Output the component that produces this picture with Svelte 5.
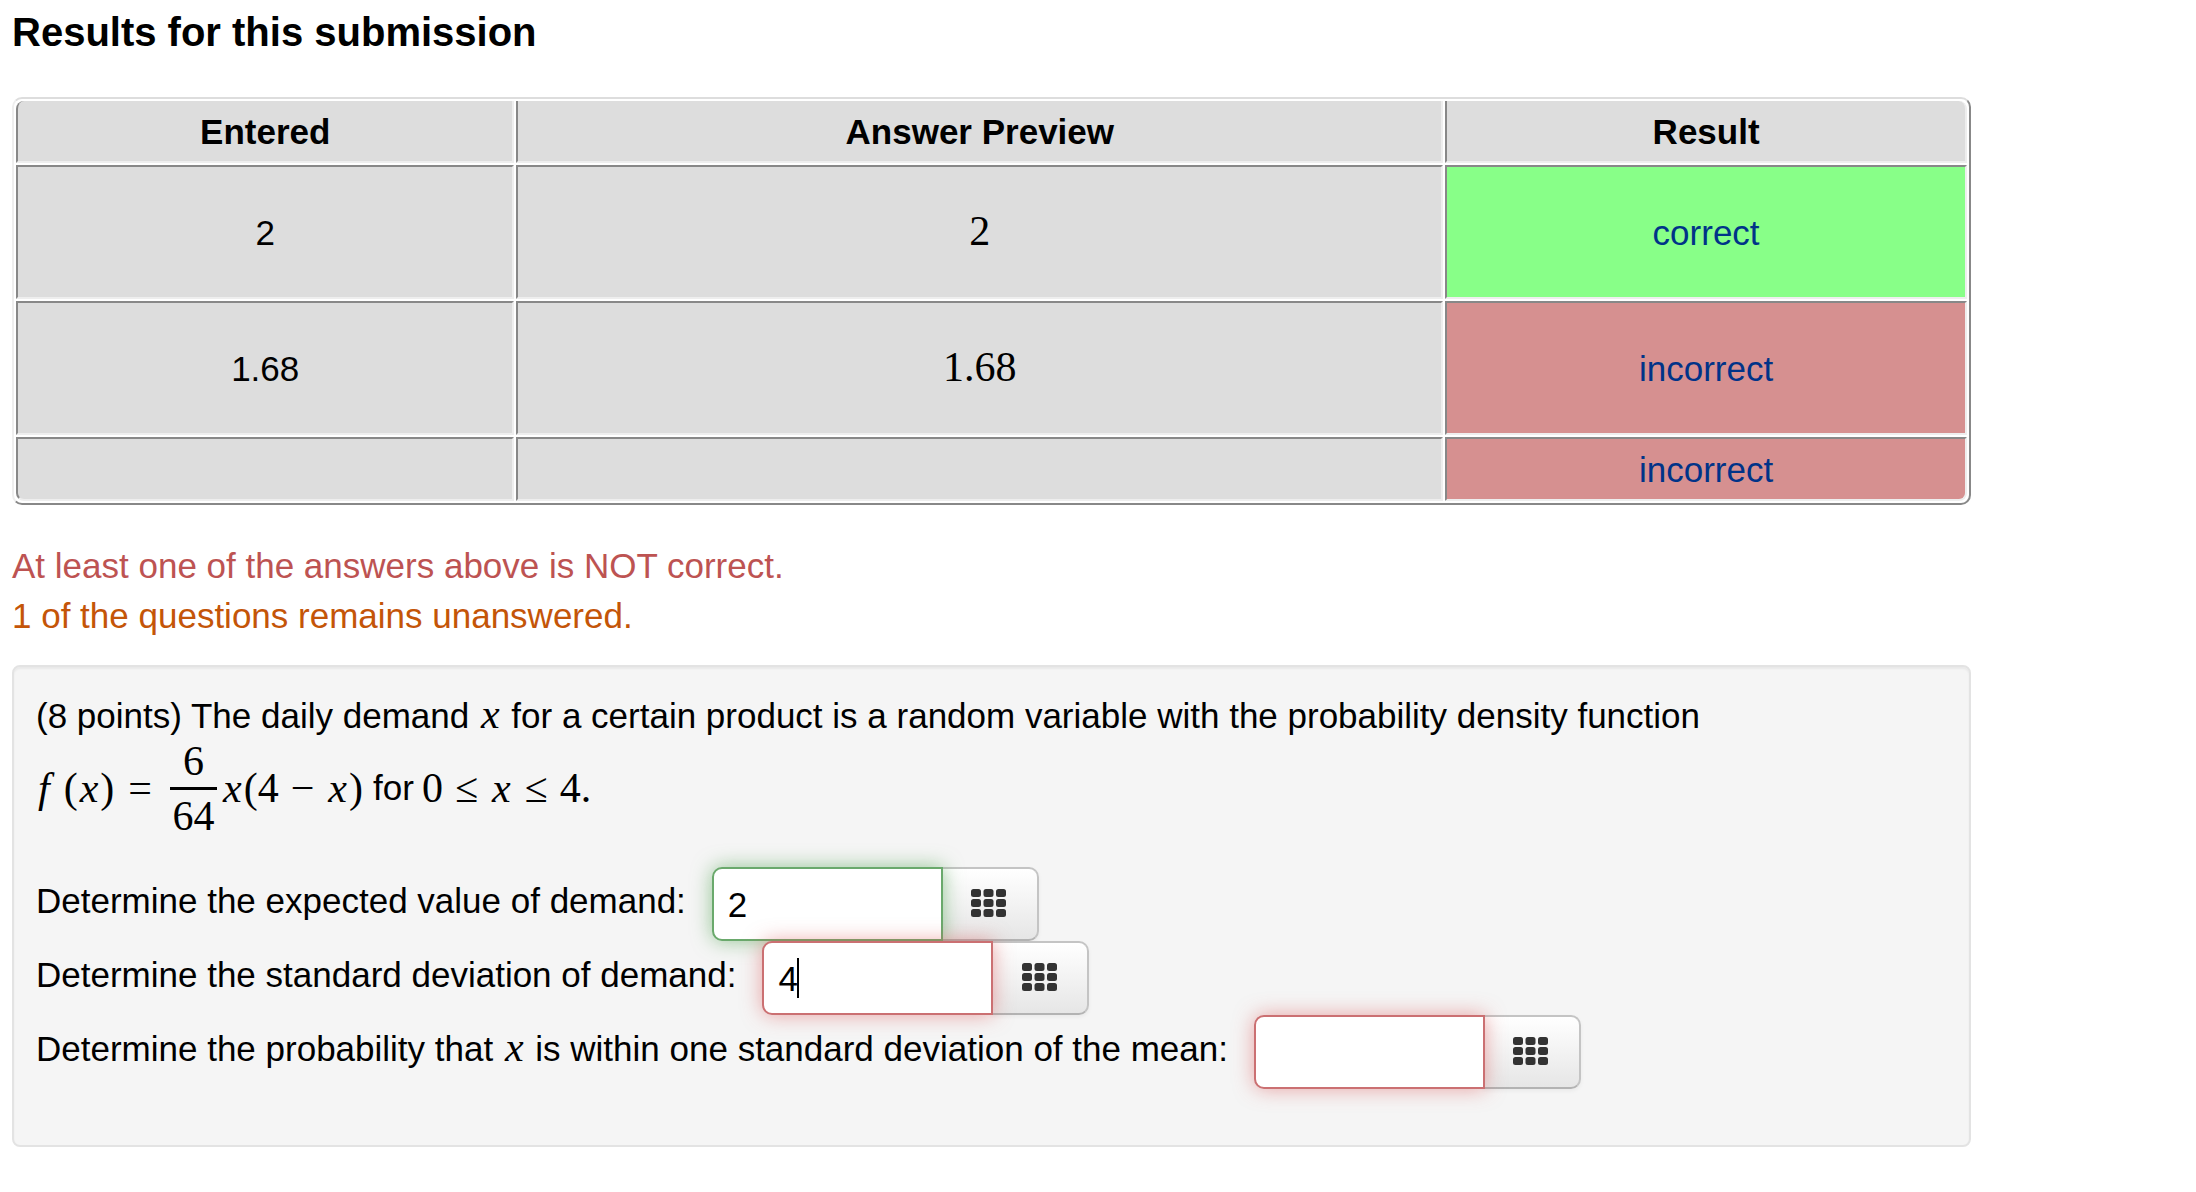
<script>
  const results = [
    { entered: '2', preview: '2', result: 'correct', tall: true },
    { entered: '1.68', preview: '1.68', result: 'incorrect', tall: true },
    { entered: '', preview: '', result: 'incorrect', tall: false }
  ];

  let expected = $state('2');
  let deviation = $state('4');
  let probability = $state('');

  const dots = [0, 1, 2].flatMap((row) => [0, 1, 2].map((col) => ({ x: col * 25, y: row * 20 })));
</script>

{#snippet keypad(label)}
  <button type="button" class="keypad" aria-label={label}>
    <svg viewBox="0 0 70 56" width="35" height="28" aria-hidden="true">
      {#each dots as dot}
        <rect x={dot.x} y={dot.y} width="20" height="16" rx="5" fill="#333" />
      {/each}
    </svg>
  </button>
{/snippet}

<main>
  <h1>Results for this submission</h1>

  <table>
    <colgroup>
      <col class="col-entered" />
      <col class="col-preview" />
      <col class="col-result" />
    </colgroup>
    <thead>
      <tr>
        <th scope="col">Entered</th>
        <th scope="col">Answer Preview</th>
        <th scope="col">Result</th>
      </tr>
    </thead>
    <tbody>
      {#each results as row}
        <tr class:tall={row.tall}>
          <td>{row.entered}</td>
          <td class="preview">{row.preview}</td>
          <td class={row.result}><a href="#answers">{row.result}</a></td>
        </tr>
      {/each}
    </tbody>
  </table>

  <div class="messages">
    <p class="wrong">At least one of the answers above is NOT correct.</p>
    <p class="unanswered">1 of the questions remains unanswered.</p>
  </div>

  <section class="problem" id="answers">
    <p class="intro">
      (8 points) The daily demand <i>x</i> for a certain product is a random variable with the probability density function
    </p>
    <div class="formula">
      <span class="math fn"><i>f</i></span>
      <span class="math">(<i>x</i>)</span>
      <span class="math equals">=</span>
      <span class="math fraction"><span class="top">6</span><span>64</span></span>
      <span class="math"><i>x</i>(4</span>
      <span class="math operator">−</span>
      <span class="math"><i>x</i>)</span>
      <span class="word">for</span>
      <span class="math">0</span>
      <span class="math operator">≤</span>
      <span class="math"><i>x</i></span>
      <span class="math operator">≤</span>
      <span class="math">4.</span>
    </div>

    <div class="question">
      <label for="expected">Determine the expected value of demand:</label>
      <div class="field ok">
        <input id="expected" type="text" bind:value={expected} />
        {@render keypad('Open equation editor for expected value')}
      </div>
    </div>
    <div class="question">
      <label for="deviation">Determine the standard deviation of demand:</label>
      <div class="field bad">
        <input id="deviation" type="text" bind:value={deviation} />
        <span class="caret"></span>
        {@render keypad('Open equation editor for standard deviation')}
      </div>
    </div>
    <div class="question">
      <label for="probability">Determine the probability that <i>x</i> is within one standard deviation of the mean:</label>
      <div class="field bad">
        <input id="probability" type="text" bind:value={probability} />
        {@render keypad('Open equation editor for probability')}
      </div>
    </div>
  </section>
</main>

<style>
  :global(body) {
    background: #fff;
  }

  main {
    padding: 8px 225px 40px 12px;
    font: 35px/50px 'Liberation Sans', Arial, sans-serif;
    color: #000;
  }

  h1 {
    margin: 0 0 41px;
    font-size: 40px;
    line-height: 48px;
    font-weight: 700;
  }

  table {
    width: 100%;
    table-layout: fixed;
    border-collapse: separate;
    border-spacing: 2px;
    border: 2px solid #888;
    border-top-color: #ddd;
    border-left-color: #eee;
    border-radius: 10px;
  }

  .col-entered {
    width: 25.6%;
  }

  .col-preview {
    width: 47.6%;
  }

  th,
  td {
    box-sizing: border-box;
    height: 64px;
    padding: 6px 4px 4px;
    border: 2px solid #eee;
    border-top-color: #888;
    border-left-color: #888;
    background: #ddd;
    text-align: center;
    vertical-align: middle;
  }

  th {
    height: 62px;
    border-top: 0;
  }

  .tall td {
    height: 134px;
  }

  th:first-child {
    border-top-left-radius: 8px;
  }

  th:last-child {
    border-top-right-radius: 8px;
  }

  tbody tr:last-child td:first-child {
    border-bottom-left-radius: 8px;
  }

  tbody tr:last-child td:last-child {
    border-bottom-right-radius: 8px;
  }

  .preview,
  .math,
  i {
    font-family: 'Liberation Serif', 'Times New Roman', serif;
    font-size: 42px;
  }

  td.preview {
    padding: 4px 4px 6px;
  }

  td.correct {
    background: #8f8;
  }

  td.incorrect {
    background: #d69090;
  }

  a {
    color: #038;
    text-decoration: none;
  }

  p {
    margin: 0;
  }

  .messages {
    padding: 36px 0 24px;
  }

  .wrong {
    color: #bd5352;
  }

  .unanswered {
    color: #c45508;
  }

  i {
    margin: 0 2px;
    line-height: 1;
  }

  .problem {
    padding: 24px 22px 56px;
    border: 2px solid #e3e3e3;
    border-radius: 8px;
    background: #f5f5f5;
    box-shadow: inset 0 2px 2px rgba(0, 0, 0, 0.05);
  }

  .formula {
    display: flex;
    align-items: center;
    gap: 12px;
    height: 94px;
    margin-bottom: 32px;
  }

  .equals {
    margin: 0 2px;
  }

  .fraction {
    display: flex;
    flex-direction: column;
    align-items: center;
    line-height: 52px;
    padding: 0 2px 0 4px;
    margin-right: -10px;
  }

  .top {
    padding: 0 13px;
    border-bottom: 3px solid #000;
  }

  .word {
    margin: 0 -4px 0 -2px;
  }

  .question {
    display: flex;
    align-items: center;
  }

  label {
    padding: 0 26px 6px 0;
  }

  .field {
    position: relative;
    display: flex;
  }

  input {
    position: relative;
    z-index: 1;
    box-sizing: border-box;
    width: 231px;
    height: 74px;
    padding: 2px 14px 0;
    border: 2px solid;
    border-radius: 10px 0 0 10px;
    background: #fff;
    color: #000;
    font: inherit;
    outline: 0;
  }

  .ok input {
    border-color: #6aa96c;
    box-shadow: 0 0 20px rgba(81, 163, 81, 0.6);
  }

  .bad input {
    border-color: #cb7072;
    box-shadow: 0 0 20px rgba(220, 80, 80, 0.5);
  }

  .caret {
    position: absolute;
    z-index: 2;
    left: 35px;
    top: 17px;
    width: 2px;
    height: 40px;
    background: #000;
  }

  .keypad {
    box-sizing: border-box;
    width: 98px;
    height: 74px;
    margin: 0 0 0 -2px;
    padding: 0 2px 2px 0;
    display: flex;
    align-items: center;
    justify-content: center;
    border: 2px solid #c4c4c4;
    border-bottom-color: #b3b3b3;
    border-radius: 0 10px 10px 0;
    background: linear-gradient(#fff, #e6e6e6);
    box-shadow: 0 2px 4px rgba(0, 0, 0, 0.05);
  }
</style>
